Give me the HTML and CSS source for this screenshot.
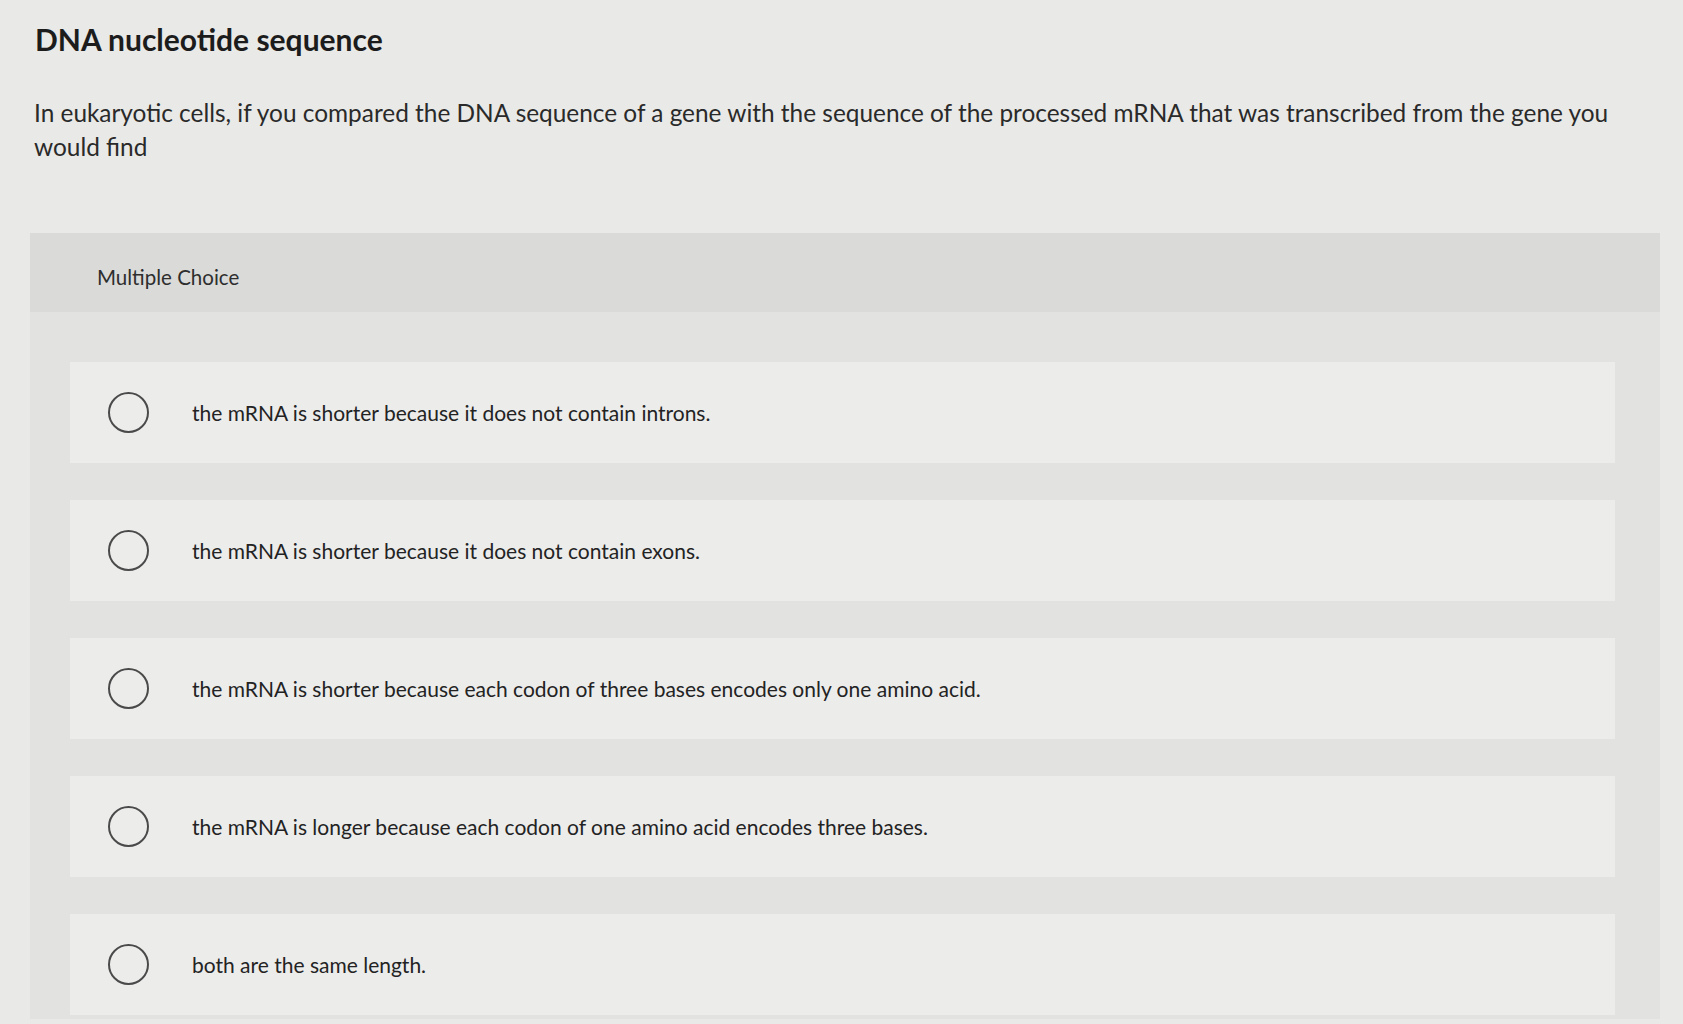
FILE: index.html
```html
<!DOCTYPE html>
<html lang="en">
<head>
<meta charset="utf-8">
<title>DNA nucleotide sequence</title>
<link rel="stylesheet" href="styles.css">
</head>
<body>
<main class="page">
  <h1 class="title">DNA nucleotide sequence</h1>
  <p class="question">In eukaryotic cells, if you compared the DNA sequence of a gene with the sequence of the processed mRNA that was transcribed from the gene you would find</p>
  <section class="mc">
    <div class="mc-header">Multiple Choice</div>
    <div class="mc-options">
      <label class="option"><span class="radio"></span><span class="option-text">the mRNA is shorter because it does not contain introns.</span></label>
      <label class="option"><span class="radio"></span><span class="option-text">the mRNA is shorter because it does not contain exons.</span></label>
      <label class="option"><span class="radio"></span><span class="option-text">the mRNA is shorter because each codon of three bases encodes only one amino acid.</span></label>
      <label class="option"><span class="radio"></span><span class="option-text">the mRNA is longer because each codon of one amino acid encodes three bases.</span></label>
      <label class="option"><span class="radio"></span><span class="option-text">both are the same length.</span></label>
    </div>
  </section>
</main>
</body>
</html>
```
FILE: styles.css
```css
* { box-sizing: border-box; }
html, body {
  margin: 0;
  padding: 0;
  background: #e9e9e7;
}
body {
  font-family: Lato, "Liberation Sans", Arial, sans-serif;
  color: #262626;
}
.page {
  padding: 23px 23px 0 30px;
  height: 1024px;
  overflow: hidden;
}
.title {
  margin: 0 0 41px 5px;
  font-size: 30px;
  line-height: 32px;
  font-weight: 700;
  color: #1c1c1c;
}
.question {
  margin: 0 0 69px 4px;
  font-size: 24.4px;
  line-height: 34px;
  color: #2a2a2a;
  max-width: 1590px;
}
.mc {
  background: #e2e2e1;
  padding-bottom: 4px;
}
.mc-header {
  height: 79px;
  display: flex;
  align-items: center;
  padding: 9px 0 0 67px;
  background: #dadad9;
  font-size: 20.5px;
  color: #2e2e2e;
}
.mc-options {
  display: flex;
  flex-direction: column;
  gap: 37px;
  padding: 50px 45px 0 40px;
}
.option {
  height: 101px;
  display: flex;
  align-items: center;
  padding-left: 38px;
  background: #ececeb;
  font-size: 21px;
  color: #232323;
}
.radio {
  width: 41px;
  height: 41px;
  border: 2px solid #4a4a4a;
  border-radius: 50%;
  flex: none;
  margin-right: 43px;
}
```
